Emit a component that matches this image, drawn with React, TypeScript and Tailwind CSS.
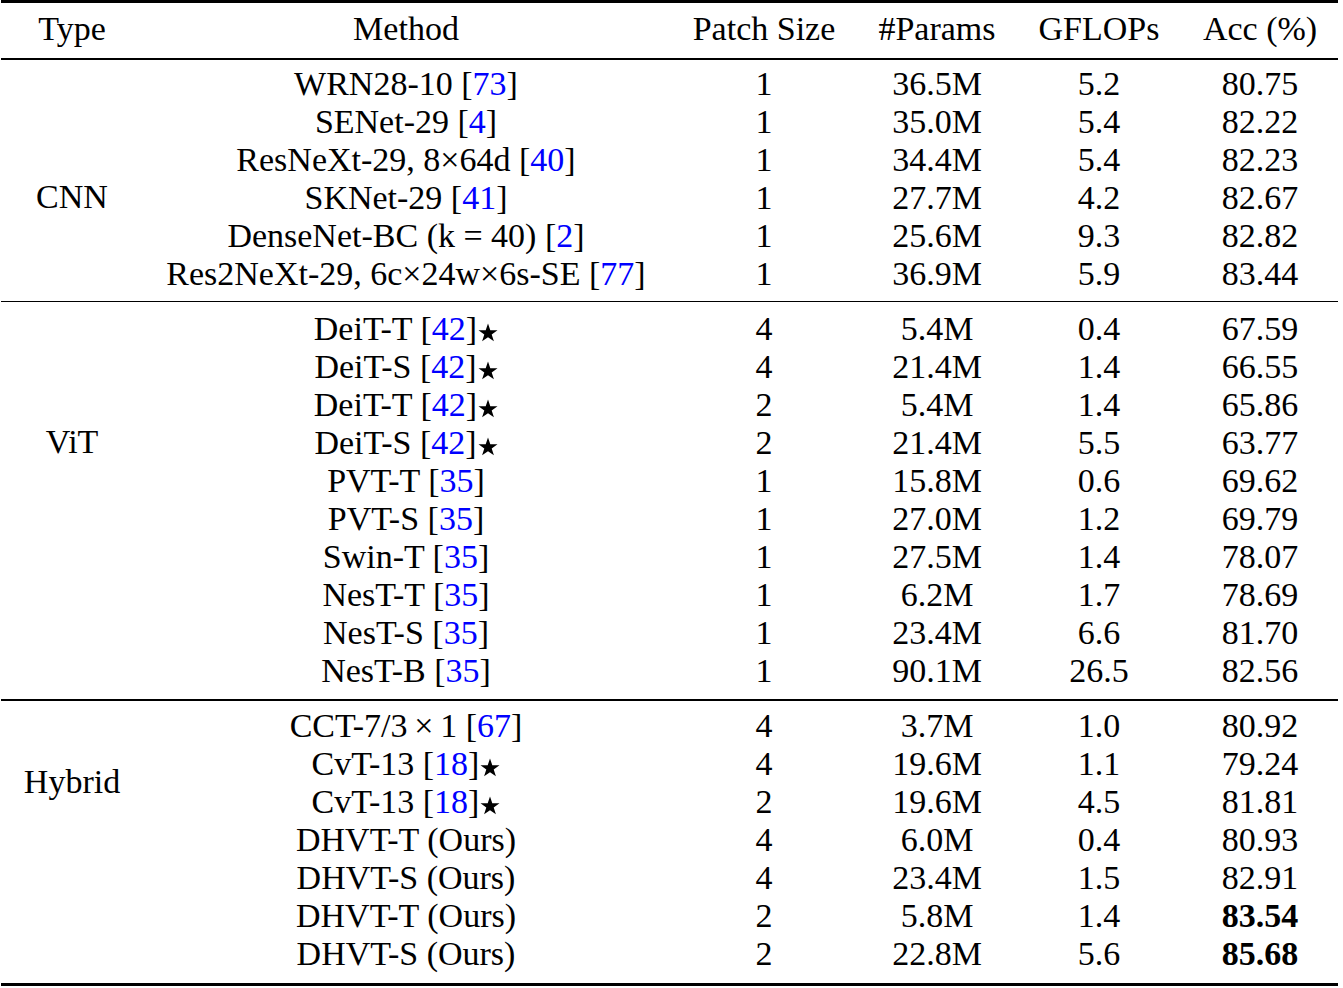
const cites = "text-[#0000ff]";

type Row = {
  name: string;
  cite?: string;
  star?: boolean;
  patch: string;
  params: string;
  flops: string;
  acc: string;
  bold?: boolean;
};

const cnn: Row[] = [
  { name: "WRN28-10", cite: "73", patch: "1", params: "36.5M", flops: "5.2", acc: "80.75" },
  { name: "SENet-29", cite: "4", patch: "1", params: "35.0M", flops: "5.4", acc: "82.22" },
  { name: "ResNeXt-29, 8\u00d764d", cite: "40", patch: "1", params: "34.4M", flops: "5.4", acc: "82.23" },
  { name: "SKNet-29", cite: "41", patch: "1", params: "27.7M", flops: "4.2", acc: "82.67" },
  { name: "DenseNet-BC (k = 40)", cite: "2", patch: "1", params: "25.6M", flops: "9.3", acc: "82.82" },
  { name: "Res2NeXt-29, 6c\u00d724w\u00d76s-SE", cite: "77", patch: "1", params: "36.9M", flops: "5.9", acc: "83.44" },
];

const vit: Row[] = [
  { name: "DeiT-T", cite: "42", star: true, patch: "4", params: "5.4M", flops: "0.4", acc: "67.59" },
  { name: "DeiT-S", cite: "42", star: true, patch: "4", params: "21.4M", flops: "1.4", acc: "66.55" },
  { name: "DeiT-T", cite: "42", star: true, patch: "2", params: "5.4M", flops: "1.4", acc: "65.86" },
  { name: "DeiT-S", cite: "42", star: true, patch: "2", params: "21.4M", flops: "5.5", acc: "63.77" },
  { name: "PVT-T", cite: "35", patch: "1", params: "15.8M", flops: "0.6", acc: "69.62" },
  { name: "PVT-S", cite: "35", patch: "1", params: "27.0M", flops: "1.2", acc: "69.79" },
  { name: "Swin-T", cite: "35", patch: "1", params: "27.5M", flops: "1.4", acc: "78.07" },
  { name: "NesT-T", cite: "35", patch: "1", params: "6.2M", flops: "1.7", acc: "78.69" },
  { name: "NesT-S", cite: "35", patch: "1", params: "23.4M", flops: "6.6", acc: "81.70" },
  { name: "NesT-B", cite: "35", patch: "1", params: "90.1M", flops: "26.5", acc: "82.56" },
];

const hybrid: Row[] = [
  { name: "CCT-7/3\u2009\u00d7\u20091", cite: "67", patch: "4", params: "3.7M", flops: "1.0", acc: "80.92" },
  { name: "CvT-13", cite: "18", star: true, patch: "4", params: "19.6M", flops: "1.1", acc: "79.24" },
  { name: "CvT-13", cite: "18", star: true, patch: "2", params: "19.6M", flops: "4.5", acc: "81.81" },
  { name: "DHVT-T (Ours)", patch: "4", params: "6.0M", flops: "0.4", acc: "80.93" },
  { name: "DHVT-S (Ours)", patch: "4", params: "23.4M", flops: "1.5", acc: "82.91" },
  { name: "DHVT-T (Ours)", patch: "2", params: "5.8M", flops: "1.4", acc: "83.54", bold: true },
  { name: "DHVT-S (Ours)", patch: "2", params: "22.8M", flops: "5.6", acc: "85.68", bold: true },
];

const cols = "grid grid-cols-[526px_190px_156px_168px_154px]";

// LaTeX \star: slim five-pointed star
function Star() {
  return (
    <svg viewBox="0 0 20 19" className="inline-block w-[20px] h-[19px] ml-[1px] align-[-2px]">
      <path
        d="M10 0.5 L12.3 7.2 L19.5 7.3 L13.7 11.5 L15.9 18.3 L10 14.2 L4.1 18.3 L6.3 11.5 L0.5 7.3 L7.7 7.2 Z"
        fill="#000"
      />
    </svg>
  );
}

function DataRow({ r }: { r: Row }) {
  return (
    <div className={`${cols} h-[38px] items-center text-center`}>
      <div className="whitespace-nowrap">
        {r.name}
        {r.cite && (
          <>
            {" "}[<span className={cites}>{r.cite}</span>]
          </>
        )}
        {r.star && <Star />}
      </div>
      <div>{r.patch}</div>
      <div>{r.params}</div>
      <div>{r.flops}</div>
      <div className={r.bold ? "font-bold" : ""}>{r.acc}</div>
    </div>
  );
}

function Group({ label, rows, labelTop, pt, pb }: { label: string; rows: Row[]; labelTop: string; pt: string; pb: string }) {
  return (
    <div className={`flex ${pt} ${pb}`}>
      <div className={`w-[142px] text-center ${labelTop}`}>{label}</div>
      <div className="flex flex-col">
        {rows.map((r, i) => (
          <DataRow key={i} r={r} />
        ))}
      </div>
    </div>
  );
}

export default function App() {
  return (
    <div className="w-[1343px] h-[988px] bg-white overflow-hidden">
      <div className="ml-[1px] w-[1337px] text-[34px] leading-[38px] text-black font-['Liberation_Serif','Times_New_Roman',serif]">
        <div className="h-[3px] bg-black" />
        <div className="flex pt-[7px] pb-[10px]">
          <div className="w-[142px] text-center">Type</div>
          <div className={`${cols} text-center whitespace-nowrap`}>
            <div>Method</div>
            <div>Patch Size</div>
            <div>#Params</div>
            <div>GFLOPs</div>
            <div>Acc (%)</div>
          </div>
        </div>
        <div className="h-[1.5px] bg-black" />
        <Group label="CNN" rows={cnn} labelTop="pt-[113px]" pt="pt-[5px]" pb="pb-[8px]" />
        <div className="h-[1.5px] bg-black" />
        <Group label="ViT" rows={vit} labelTop="pt-[113px]" pt="pt-[8px]" pb="pb-[9px]" />
        <div className="h-[1.5px] bg-black" />
        <Group label="Hybrid" rows={hybrid} labelTop="pt-[56px]" pt="pt-[6px]" pb="pb-[10px]" />
        <div className="h-[3px] bg-black" />
      </div>
    </div>
  );
}
